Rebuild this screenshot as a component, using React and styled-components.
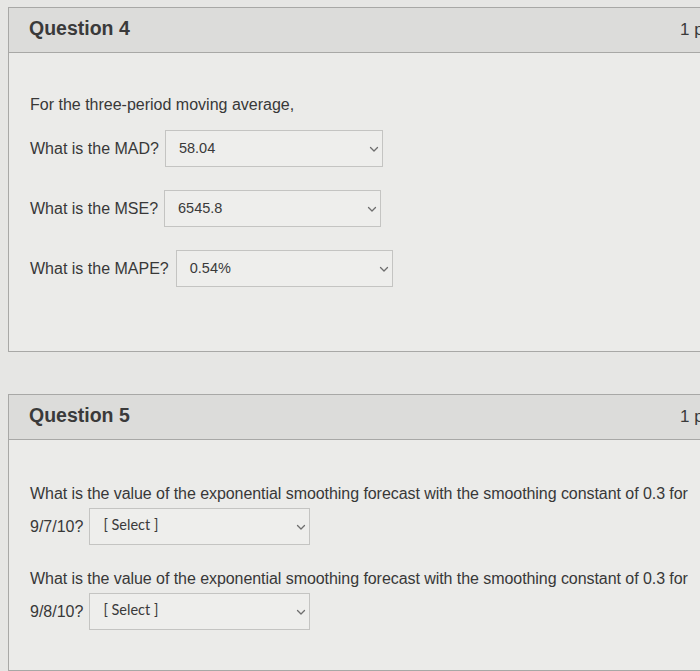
import React from 'react';
import styled, {createGlobalStyle} from 'styled-components';

const GlobalStyle = createGlobalStyle`
  html, body {
    margin: 0;
    padding: 0;
    background: #e6e6e4;
    font-family: "Liberation Sans", Arial, sans-serif;
    color: #383838;
    overflow: hidden;
  }
`;

const Page = styled.div`
  width: 700px;
  height: 671px;
  overflow: hidden;
  padding: 7px 0 0 8px;
  box-sizing: border-box;
`;

const Card = styled.section`
  width: 740px;
  border: 1px solid #a8a8a6;
  background: #ebebe9;
  margin-bottom: ${p => p.gap || 0}px;
`;

const Header = styled.div`
  height: 44px;
  display: flex;
  align-items: center;
  justify-content: space-between;
  padding: 0 18px 0 20px;
  background: #dcdcda;
  border-bottom: 1px solid #a8a8a6;
`;

const Title = styled.h2`
  margin: 0 0 3px;
  font-size: 19.5px;
  font-weight: bold;
  color: #3a3a3a;
`;

const Points = styled.span`
  font-size: 17px;
  color: #3a3a3a;
  width: 51px;
  white-space: nowrap;
`;

const Body = styled.div`
  padding: ${p => p.pad};
  display: flex;
  flex-direction: column;
`;

const Text = styled.p`
  margin: 0;
  font-size: 16px;
  line-height: 20px;
  color: #383838;
  letter-spacing: ${p => p.tight ? '-0.06px' : 'normal'};
  white-space: nowrap;
`;

const Row = styled.div`
  display: flex;
  align-items: center;
  gap: ${p => p.gap || 6}px;
  margin-top: ${p => p.top || 0}px;
`;

const Question = styled.div`
  margin-top: ${p => p.top || 0}px;
`;

const SelectBox = styled.div`
  width: ${p => p.width}px;
  height: 37px;
  box-sizing: border-box;
  border: 1px solid #c4c4c2;
  background: #eeeeec;
  display: flex;
  align-items: center;
  justify-content: space-between;
  padding: 0 1px 0 13px;
  font-size: 14.5px;
  color: #3a3a3a;
  font-family: ${p => p.placeholder ? 'Lato, "Liberation Sans", sans-serif' : '"Liberation Sans", Arial, sans-serif'};
  span { margin-top: ${p => p.placeholder ? '-4px' : '-2px'}; }
`;

const Chevron = () => (
  <svg width="14" height="14" viewBox="0 0 14 14" fill="none">
    <path d="M3.5 5.5 L7 9 L10.5 5.5" stroke="#6e6e6e" strokeWidth="1.3" strokeLinecap="round" strokeLinejoin="round"/>
  </svg>
);

const Select = ({value, width, placeholder}) => (
  <SelectBox width={width} placeholder={placeholder}>
    <span>{value}</span>
    <Chevron/>
  </SelectBox>
);

const q4Rows = [
  {label: 'What is the MAD?', value: '58.04', width: 218},
  {label: 'What is the MSE?', value: '6545.8', width: 217},
  {label: 'What is the MAPE?', value: '0.54%', width: 217},
];

const q5Items = ['9/7/10?', '9/8/10?'];

export default function App() {
  return (
    <Page>
      <GlobalStyle/>
      <Card gap={42}>
        <Header>
          <Title>Question 4</Title>
          <Points>1 pts</Points>
        </Header>
        <Body pad="42px 21px 64px">
          <Text>For the three-period moving average,</Text>
          {q4Rows.map((r, i) => (
            <Row key={r.label} top={i === 0 ? 15 : 23} gap={i === 2 ? 7 : 6}>
              <Text>{r.label}</Text>
              <Select value={r.value} width={r.width}/>
            </Row>
          ))}
        </Body>
      </Card>
      <Card>
        <Header>
          <Title>Question 5</Title>
          <Points>1 pts</Points>
        </Header>
        <Body pad="44px 21px 40px">
          {q5Items.map((date, i) => (
            <Question key={date} top={i === 0 ? 0 : 24}>
              <Text tight>What is the value of the exponential smoothing forecast with the smoothing constant of 0.3 for</Text>
              <Row top={4} gap={6}>
                <Text>{date}</Text>
                <Select value="[ Select ]" width={221} placeholder/>
              </Row>
            </Question>
          ))}
        </Body>
      </Card>
    </Page>
  );
}
